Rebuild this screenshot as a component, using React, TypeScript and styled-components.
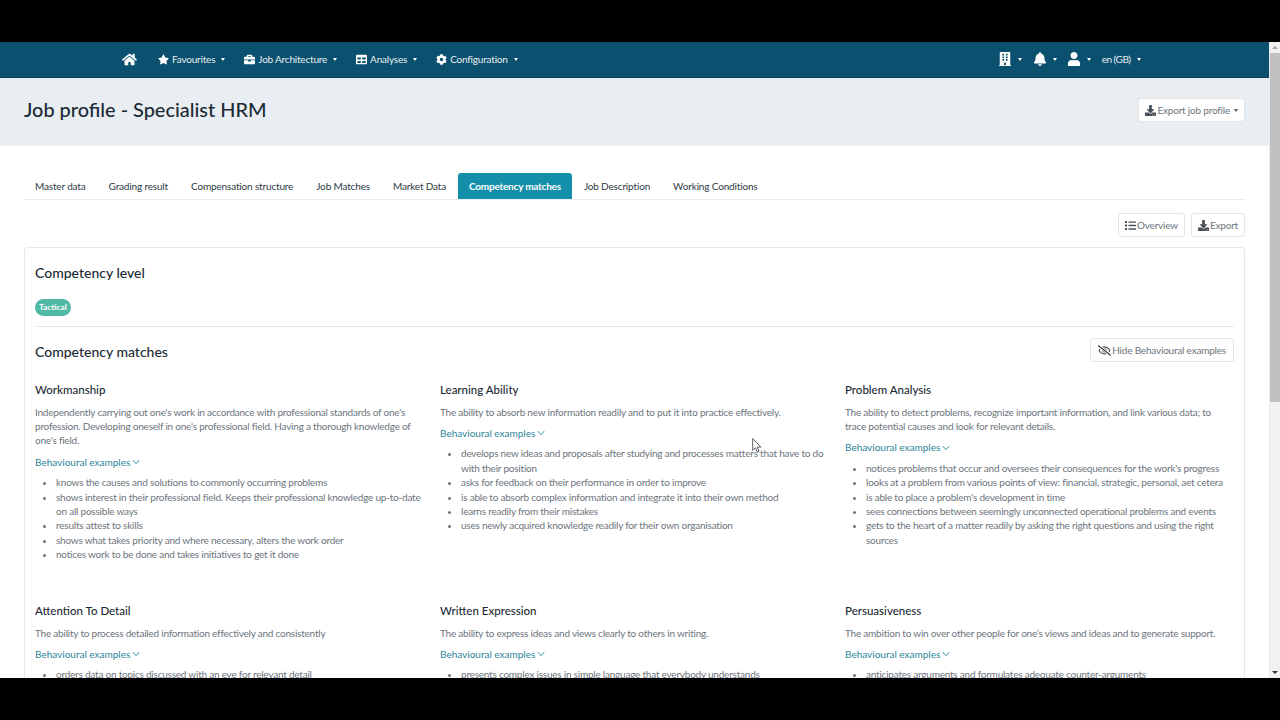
import React from 'react';
import styled, { createGlobalStyle } from 'styled-components';
import { FaHome, FaStar, FaBriefcase, FaTable, FaCog, FaBuilding, FaBell, FaUser, FaDownload, FaList, FaRegEyeSlash } from 'react-icons/fa';
import { BsChevronDown } from 'react-icons/bs';

const GlobalStyle = createGlobalStyle`
  html, body { margin: 0; height: 100%; background: #000; overflow: hidden; }
  * { box-sizing: border-box; }
  body { font-family: Lato, "Liberation Sans", sans-serif; }
`;

const Screen = styled.div`
  position: relative;
  width: 1280px;
  height: 720px;
  padding: 42px 0;
  background: #000;
`;

const Frame = styled.div`
  height: 636px;
  display: flex;
  background: #fff;
  overflow: hidden;
`;

const Page = styled.div`
  width: 1269px;
  flex: none;
  overflow: hidden;
`;

const Scrollbar = styled.div`
  flex: 1;
  display: flex;
  flex-direction: column;
  align-items: center;
  background: #f1f1f1;
  border-left: 1px solid #ececec;
`;

const ScrollArrow = styled.div<{ $up?: boolean }>`
  height: 11px;
  flex: none;
  display: flex;
  align-items: center;
  justify-content: center;
  &::after {
    content: '';
    border-left: 3px solid transparent;
    border-right: 3px solid transparent;
    ${p => (p.$up ? 'border-bottom: 3px solid #a3a3a3;' : 'border-top: 3px solid #333;')}
  }
`;

const ScrollThumb = styled.div`
  width: 100%;
  height: 349px;
  background: #c1c1c1;
`;

const ScrollSpace = styled.div`
  flex: 1;
`;

const MouseCursor = styled.svg`
  position: absolute;
  left: 752px;
  top: 438px;
`;

const Navbar = styled.nav`
  height: 36px;
  display: flex;
  align-items: center;
  padding: 0 0 1px 122px;
  background: #0b506f;
  border-bottom: 1px solid #0a4058;
  color: #e6eef2;
  font-size: 10px;
  letter-spacing: -0.2px;
`;

const HomeLink = styled.span`
  display: flex;
  color: #fff;
  font-size: 15px;
  margin-right: 21px;
`;

const NavItem = styled.span<{ $gap?: number }>`
  display: flex;
  align-items: center;
  gap: 3px;
  margin-right: ${p => p.$gap ?? 19}px;
  white-space: nowrap;
  svg { font-size: 11px; color: #fff; }
`;

const LangItem = styled(NavItem)`
  letter-spacing: -0.5px;
`;

const NavIcon = styled.span`
  display: flex;
  color: #fff;
  font-size: 14px;
  svg { font-size: inherit; }
`;

const Caret = styled.i<{ $dark?: boolean }>`
  display: inline-block;
  margin-left: 3px;
  border-left: 2.5px solid transparent;
  border-right: 2.5px solid transparent;
  border-top: 3px solid ${p => (p.$dark ? '#555' : '#fff')};
`;

const NavRight = styled.div`
  margin-left: 461px;
  display: flex;
  align-items: center;
`;

const Banner = styled.header`
  height: 68px;
  display: flex;
  align-items: center;
  justify-content: space-between;
  padding: 0 24px 4px;
  background: #e9eef2;
`;

const PageTitle = styled.h1`
  margin: 0 0 2px;
  font-size: 19.9px;
  font-weight: 500;
  color: #1c2b36;
`;

const Button = styled.button`
  height: 24px;
  display: inline-flex;
  align-items: center;
  gap: 1px;
  padding: 0 6px;
  background: #fff;
  border: 1px solid #e3e6e8;
  border-radius: 3px;
  color: #6c757d;
  font: inherit;
  font-size: 10px;
  letter-spacing: -0.2px;
  white-space: nowrap;
  svg { color: #495057; font-size: 11px; }
`;

const HideButton = styled(Button)`
  padding: 0 7px;
  svg { color: #333; font-size: 13px; }
`;

const Content = styled.main`
  padding: 27px 24px 0;
`;

const Tabs = styled.div`
  height: 27px;
  display: flex;
  border-bottom: 1px solid #e9ecef;
`;

const Tab = styled.span<{ $active?: boolean }>`
  height: 26px;
  display: flex;
  align-items: center;
  padding: 0 11px 1px;
  margin-right: 1px;
  border-radius: 3px 3px 0 0;
  font-size: 10px;
  letter-spacing: ${p => (p.$active ? -0.22 : -0.16)}px;
  white-space: nowrap;
  color: ${p => (p.$active ? '#fff' : '#2d3a44')};
  background: ${p => (p.$active ? '#138fa9' : 'transparent')};
  font-weight: ${p => (p.$active ? 700 : 400)};
`;

const ActionRow = styled.div`
  display: flex;
  justify-content: flex-end;
  gap: 6px;
  padding: 13px 0 10px;
`;

const Card = styled.section`
  border: 1px solid #e6e8ea;
  border-radius: 3px;
  padding: 16px 10px 0;
`;

const SectionTitle = styled.h2`
  margin: 0;
  font-size: 14px;
  font-weight: 500;
  line-height: 18px;
  color: #1c2b36;
`;

const MatchesTitle = styled(SectionTitle)`
  margin-top: 4px;
`;

const Pill = styled.span`
  display: inline-block;
  margin-top: 17px;
  padding: 0 4px;
  height: 17px;
  line-height: 17px;
  border-radius: 9px;
  background: #4fb9a6;
  color: #fff;
  font-size: 8.3px;
  font-weight: 700;
`;

const Rule = styled.hr`
  margin: 10px 0 0;
  border: 0;
  border-top: 1px solid #e6e8ea;
`;

const MatchesHead = styled.div`
  display: flex;
  align-items: center;
  justify-content: space-between;
  height: 24px;
  margin-top: 11px;
`;

const Grid = styled.div`
  display: grid;
  grid-template-columns: repeat(3, 389px);
  column-gap: 16px;
  margin-top: 20px;
`;

const Competency = styled.article<{ $height: number }>`
  height: ${p => p.$height}px;
`;

const CompetencyName = styled.h3`
  margin: 0 0 7.5px;
  font-size: 11.5px;
  font-weight: 500;
  line-height: 15px;
  color: #1c2b36;
`;

const Description = styled.p`
  margin: 0 0 7px;
  font-size: 10px;
  letter-spacing: -0.22px;
  line-height: 14.4px;
  color: #6c757d;
`;

const ExamplesLink = styled.a`
  display: flex;
  align-items: center;
  gap: 2px;
  font-size: 10px;
  line-height: 14.4px;
  color: #2a8599;
  svg { font-size: 8px; stroke: currentColor; stroke-width: 0.4px; }
`;

const Examples = styled.ul`
  margin: 6px 0 0;
  padding-left: 21px;
  font-size: 10px;
  letter-spacing: -0.22px;
  line-height: 14.4px;
  color: #6c757d;
`;

const competencies = [
  {
    name: 'Workmanship',
    text: "Independently carrying out one's work in accordance with professional standards of one's profession. Developing oneself in one's professional field. Having a thorough knowledge of one's field.",
    examples: [
      'knows the causes and solutions to commonly occurring problems',
      'shows interest in their professional field. Keeps their professional knowledge up-to-date on all possible ways',
      'results attest to skills',
      'shows what takes priority and where necessary, alters the work order',
      'notices work to be done and takes initiatives to get it done',
    ],
  },
  {
    name: 'Learning Ability',
    text: 'The ability to absorb new information readily and to put it into practice effectively.',
    examples: [
      'develops new ideas and proposals after studying and processes matters that have to do with their position',
      'asks for feedback on their performance in order to improve',
      'is able to absorb complex information and integrate it into their own method',
      'learns readily from their mistakes',
      'uses newly acquired knowledge readily for their own organisation',
    ],
  },
  {
    name: 'Problem Analysis',
    text: 'The ability to detect problems, recognize important information, and link various data; to trace potential causes and look for relevant details.',
    examples: [
      "notices problems that occur and oversees their consequences for the work's progress",
      'looks at a problem from various points of view: financial, strategic, personal, aet cetera',
      "is able to place a problem's development in time",
      'sees connections between seemingly unconnected operational problems and events',
      'gets to the heart of a matter readily by asking the right questions and using the right sources',
    ],
  },
  {
    name: 'Attention To Detail',
    text: 'The ability to process detailed information effectively and consistently',
    examples: ['orders data on topics discussed with an eye for relevant detail'],
  },
  {
    name: 'Written Expression',
    text: 'The ability to express ideas and views clearly to others in writing.',
    examples: ['presents complex issues in simple language that everybody understands'],
  },
  {
    name: 'Persuasiveness',
    text: 'The ambition to win over other people for one’s views and ideas and to generate support.',
    examples: ['anticipates arguments and formulates adequate counter-arguments'],
  },
];

const tabs = ['Master data', 'Grading result', 'Compensation structure', 'Job Matches', 'Market Data', 'Competency matches', 'Job Description', 'Working Conditions'];

export default function App() {
  return (
    <Screen>
      <GlobalStyle />
      <Frame>
        <Page>
          <Navbar>
            <HomeLink><FaHome /></HomeLink>
            <NavItem><FaStar />Favourites <Caret /></NavItem>
            <NavItem><FaBriefcase />Job Architecture <Caret /></NavItem>
            <NavItem><FaTable />Analyses <Caret /></NavItem>
            <NavItem><FaCog />Configuration <Caret /></NavItem>
            <NavRight>
              <NavItem $gap={11}><NavIcon><FaBuilding /></NavIcon><Caret /></NavItem>
              <NavItem $gap={10}><NavIcon><FaBell /></NavIcon><Caret /></NavItem>
              <NavItem $gap={11}><NavIcon><FaUser /></NavIcon><Caret /></NavItem>
              <LangItem $gap={0}>en (GB) <Caret /></LangItem>
            </NavRight>
          </Navbar>
          <Banner>
            <PageTitle>Job profile - Specialist HRM</PageTitle>
            <Button><FaDownload />Export job profile <Caret $dark /></Button>
          </Banner>
          <Content>
            <Tabs>
              {tabs.map(t => (
                <Tab key={t} $active={t === 'Competency matches'}>{t}</Tab>
              ))}
            </Tabs>
            <ActionRow>
              <Button><FaList />Overview</Button>
              <Button><FaDownload />Export</Button>
            </ActionRow>
            <Card>
              <SectionTitle>Competency level</SectionTitle>
              <Pill>Tactical</Pill>
              <Rule />
              <MatchesHead>
                <MatchesTitle>Competency matches</MatchesTitle>
                <HideButton><FaRegEyeSlash />Hide Behavioural examples</HideButton>
              </MatchesHead>
              <Grid>
                {competencies.map((c, i) => (
                  <Competency key={c.name} $height={i < 3 ? 221 : 80}>
                    <CompetencyName>{c.name}</CompetencyName>
                    <Description>{c.text}</Description>
                    <ExamplesLink>Behavioural examples <BsChevronDown /></ExamplesLink>
                    <Examples>
                      {c.examples.map(e => <li key={e}>{e}</li>)}
                    </Examples>
                  </Competency>
                ))}
              </Grid>
            </Card>
          </Content>
        </Page>
        <Scrollbar>
          <ScrollArrow $up />
          <ScrollThumb />
          <ScrollSpace />
          <ScrollArrow />
        </Scrollbar>
      </Frame>
      <MouseCursor width="10" height="15" viewBox="0 0 9 14">
        <path d="M0.5 0.5v11l2.6-2.4 1.7 4 1.6-.7-1.7-3.9h3.4z" fill="#fff" stroke="#444" strokeWidth="0.8" />
      </MouseCursor>
    </Screen>
  );
}
